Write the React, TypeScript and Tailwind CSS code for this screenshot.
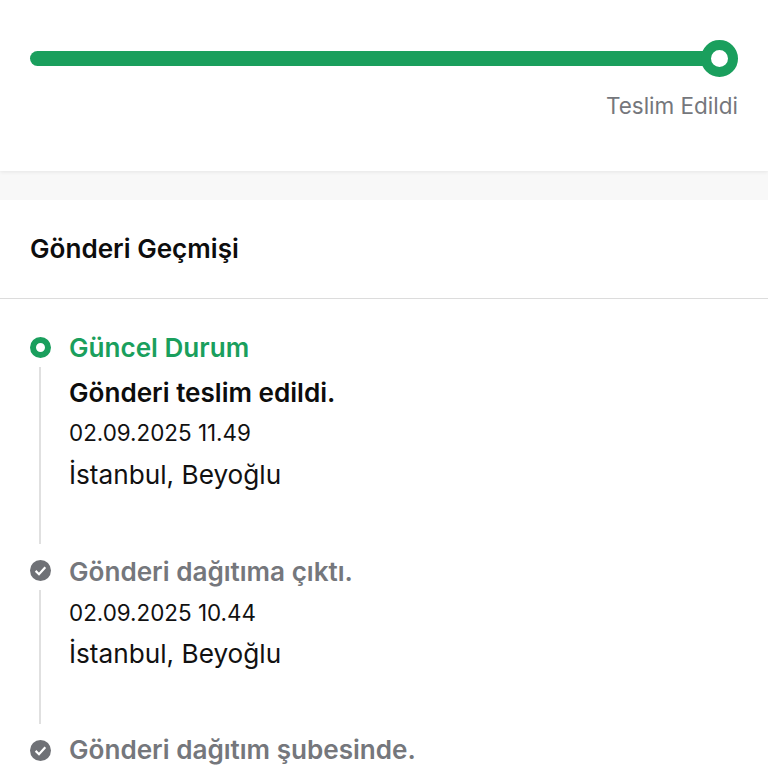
function Check() {
  return (
    <svg width="21" height="21" viewBox="0 0 21 21" className="block shrink-0">
      <circle cx="10.5" cy="10.5" r="10.5" fill="#6f7176" />
      <path d="M5.6 10.9l3.4 3.3 6.3-6.9" fill="none" stroke="#fff" strokeWidth="2.2" />
    </svg>
  );
}

function Step({ title, date, place, h }: { title: string; date: string; place: string; h: string }) {
  return (
    <div className={`flex gap-[18px] ${h}`}>
      <div className="flex w-[21px] flex-col">
        <Check />
        <div className="mt-[9px] mb-[16px] ml-[9px] w-[2px] flex-1 bg-[#e0e0e0]" />
      </div>
      <div className="-mt-[3px] flex-1">
        <div className="text-[26.1px] leading-[30px] font-semibold text-[#75777c]">{title}</div>
        <div className="mt-[11px] text-[22.4px] leading-[30px] text-[#111]">{date}</div>
        <div className="mt-[11px] text-[26.2px] leading-[30px] text-[#111]">{place}</div>
      </div>
    </div>
  );
}

export default function App() {
  return (
    <div className="h-[768px] w-[768px] overflow-hidden bg-white font-['Inter',sans-serif]">
      <div className="relative h-[171px] bg-white px-[30px] pt-[40px] shadow-[0_1px_4px_rgba(0,0,0,0.08)]">
        <div className="flex h-[37px] items-center">
          <div className="h-[15px] flex-1 rounded-l-full bg-[#1a9f5d]" />
          <div className="-ml-1 h-[37px] w-[37px] rounded-full border-[10px] border-[#1a9f5d] bg-white" />
        </div>
        <div className="mt-[14px] text-right text-[22.5px] leading-[30px] text-[#75777c]">Teslim Edildi</div>
      </div>
      <div className="h-[29px] bg-[#f8f8f8]" />
      <div className="flex h-[99px] items-center border-b border-[#dcdcdc] px-[30px] text-[26.1px] font-semibold text-[#0d0d0d]">
        Gönderi Geçmişi
      </div>
      <div className="px-[30px] pt-[38px]">
        <div className="flex h-[223px] gap-[18px]">
          <div className="flex w-[21px] flex-col">
            <div className="h-[21px] w-[21px] rounded-full border-[6px] border-[#1a9f5d] bg-white" />
            <div className="mt-[9px] mb-[16px] ml-[9px] w-[2px] flex-1 bg-[#e0e0e0]" />
          </div>
          <div className="-mt-[4px] flex-1">
            <div className="text-[26.1px] leading-[30px] font-semibold text-[#1a9f5d]">Güncel Durum</div>
            <div className="mt-[15px] text-[26.1px] leading-[30px] font-semibold text-[#0d0d0d]">Gönderi teslim edildi.</div>
            <div className="mt-[10px] text-[22.4px] leading-[30px] text-[#111]">02.09.2025 11.49</div>
            <div className="mt-[12px] text-[26.2px] leading-[30px] text-[#111]">İstanbul, Beyoğlu</div>
          </div>
        </div>
        <Step title="Gönderi dağıtıma çıktı." date="02.09.2025 10.44" place="İstanbul, Beyoğlu" h="h-[180px]" />
        <div className="flex gap-[18px]">
          <Check />
          <div className="-mt-[5px] text-[26.1px] leading-[30px] font-semibold text-[#75777c]">Gönderi dağıtım şubesinde.</div>
        </div>
      </div>
    </div>
  );
}
